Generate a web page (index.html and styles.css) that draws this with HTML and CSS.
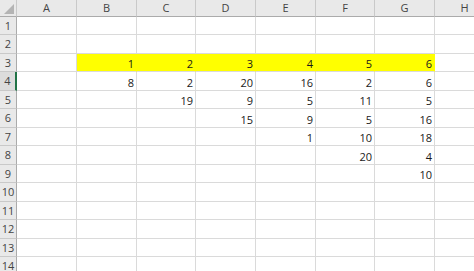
FILE: index.html
```html
<!DOCTYPE html>
<html>
<head>
    <meta charset='utf-8'>
    <title>Sheet1</title>
    <link rel="stylesheet" href="styles.css">
</head>
<body>
    <div class="sheet">
        <div class="hd corner"><svg width="10" height="10" viewBox="0 0 10 10"><polygon points="10,0 10,10 0,10" fill="#b4b4b4"/></svg></div>
        <div class="hd">A</div><div class="hd">B</div><div class="hd">C</div><div class="hd">D</div>
        <div class="hd">E</div><div class="hd">F</div><div class="hd">G</div><div class="hd">H</div>

        <div class="rh">1</div><div class="c"></div><div class="c"></div><div class="c"></div><div class="c"></div><div class="c"></div><div class="c"></div><div class="c"></div><div class="c"></div>
        <div class="rh">2</div><div class="c"></div><div class="c"></div><div class="c"></div><div class="c"></div><div class="c"></div><div class="c"></div><div class="c"></div><div class="c"></div>
        <div class="rh">3</div><div class="c"></div><div class="c fill">1</div><div class="c fill">2</div><div class="c fill">3</div><div class="c fill">4</div><div class="c fill">5</div><div class="c fill">6</div><div class="c"></div>
        <div class="rh active">4</div><div class="c"></div><div class="c">8</div><div class="c">2</div><div class="c">20</div><div class="c">16</div><div class="c">2</div><div class="c">6</div><div class="c"></div>
        <div class="rh">5</div><div class="c"></div><div class="c"></div><div class="c">19</div><div class="c">9</div><div class="c">5</div><div class="c">11</div><div class="c">5</div><div class="c"></div>
        <div class="rh">6</div><div class="c"></div><div class="c"></div><div class="c"></div><div class="c">15</div><div class="c">9</div><div class="c">5</div><div class="c">16</div><div class="c"></div>
        <div class="rh">7</div><div class="c"></div><div class="c"></div><div class="c"></div><div class="c"></div><div class="c">1</div><div class="c">10</div><div class="c">18</div><div class="c"></div>
        <div class="rh">8</div><div class="c"></div><div class="c"></div><div class="c"></div><div class="c"></div><div class="c"></div><div class="c">20</div><div class="c">4</div><div class="c"></div>
        <div class="rh">9</div><div class="c"></div><div class="c"></div><div class="c"></div><div class="c"></div><div class="c"></div><div class="c"></div><div class="c">10</div><div class="c"></div>
        <div class="rh">10</div><div class="c"></div><div class="c"></div><div class="c"></div><div class="c"></div><div class="c"></div><div class="c"></div><div class="c"></div><div class="c"></div>
        <div class="rh">11</div><div class="c"></div><div class="c"></div><div class="c"></div><div class="c"></div><div class="c"></div><div class="c"></div><div class="c"></div><div class="c"></div>
        <div class="rh">12</div><div class="c"></div><div class="c"></div><div class="c"></div><div class="c"></div><div class="c"></div><div class="c"></div><div class="c"></div><div class="c"></div>
        <div class="rh">13</div><div class="c"></div><div class="c"></div><div class="c"></div><div class="c"></div><div class="c"></div><div class="c"></div><div class="c"></div><div class="c"></div>
        <div class="rh">14</div><div class="c"></div><div class="c"></div><div class="c"></div><div class="c"></div><div class="c"></div><div class="c"></div><div class="c"></div><div class="c"></div>
    </div>
</body>
</html>
```
FILE: styles.css
```css
* {
    margin: 0;
    padding: 0;
    box-sizing: border-box;
}

body {
    width: 474px;
    height: 271px;
    overflow: hidden;
    background: #fff;
    font-family: 'Open Sans', sans-serif;
    font-size: 11px;
    color: #1a1a1a;
}

.sheet {
    display: grid;
    grid-template-columns: 17px 60px 60px 59px 60px 60px 59px 60px 60px;
    grid-template-rows: 17px repeat(7, 18px 19px);
}

.hd {
    background: #e9e9e9;
    border-right: 1px solid #c9c9c9;
    border-bottom: 1px solid #ababab;
    color: #444;
    display: flex;
    align-items: center;
    justify-content: center;
    line-height: 14px;
}

.corner {
    align-items: flex-end;
    justify-content: flex-end;
    padding: 0 2px 2px 0;
}

.rh {
    background: #e9e9e9;
    border-right: 1px solid #ababab;
    border-bottom: 1px solid #c9c9c9;
    color: #444;
    display: flex;
    align-items: center;
    justify-content: center;
    line-height: 14px;
}

.rh.active {
    background: #dcdcdc;
    border-right: 2px solid #217346;
}

.c {
    border-right: 1px solid #dadada;
    border-bottom: 1px solid #dadada;
    display: flex;
    align-items: flex-end;
    justify-content: flex-end;
    padding-right: 2px;
    line-height: 14px;
}

.fill {
    background: #ffff00;
    border-right-color: #ffff00;
}
```
